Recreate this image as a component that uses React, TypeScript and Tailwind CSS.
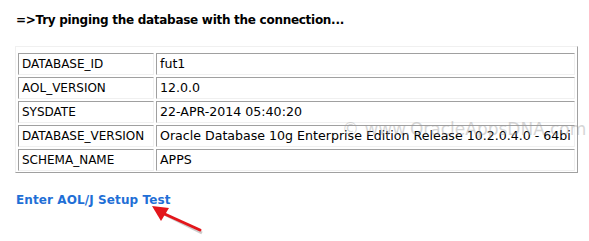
const rows: [string, string][] = [
  ["DATABASE_ID", "fut1"],
  ["AOL_VERSION", "12.0.0"],
  ["SYSDATE", "22-APR-2014 05:40:20"],
  ["DATABASE_VERSION", "Oracle Database 10g Enterprise Edition Release 10.2.0.4.0 - 64bi"],
  ["SCHEMA_NAME", "APPS"],
];

const font = { fontFamily: '"DejaVu Sans", Verdana, sans-serif' };

export default function App() {
  return (
    <div className="relative w-[589px] h-[241px] bg-white overflow-hidden text-black" style={font}>
      <div className="pl-[16px] pt-[13px] h-[46px] text-[12px] font-bold leading-[15px] tracking-[-0.28px]">
        =&gt;Try pinging the database with the connection...
      </div>

      {/* Result table */}
      <div className="ml-[15px] w-[563px] border border-t-[#f0f0f0] border-l-[#f0f0f0] border-r-[#a0a0a0] border-b-[#a0a0a0] pt-[6px] px-[2px] pb-[1px] flex flex-col gap-[2px]">
        {rows.map(([k, v]) => (
          <div key={k} className="flex gap-[2px] h-[22px]">
            <div className="w-[136px] shrink-0 border border-t-[#a0a0a0] border-l-[#a0a0a0] border-r-[#f0f0f0] border-b-[#f0f0f0] pl-[3px] text-[12px] leading-[20px] whitespace-nowrap overflow-hidden">
              {k}
            </div>
            <div className="flex-1 min-w-0 border border-t-[#a0a0a0] border-l-[#a0a0a0] border-r-[#f0f0f0] border-b-[#f0f0f0] pl-[3px] text-[12.6px] leading-[20px] whitespace-nowrap overflow-hidden">
              {v}
            </div>
          </div>
        ))}
      </div>

      <a href="#" className="block ml-[16px] mt-[20px] w-fit text-[12px] font-bold leading-[15px] tracking-[0.1px] text-[#1f6fd6] no-underline">
        Enter AOL/J Setup Test
      </a>

      {/* watermark */}
      <div className="absolute left-[342px] top-[119px] text-[17px] leading-[20px] text-[#9a9a9a] opacity-40 whitespace-nowrap pointer-events-none">
        © www.OracleAppsDNA.com
      </div>

      {/* red arrow */}
      <svg className="absolute left-[146px] top-[200px]" width="60" height="36" viewBox="0 0 60 36">
        <line x1="16" y1="13" x2="56" y2="33" stroke="#9a9a9a" strokeOpacity="0.5" strokeWidth="3" />
        <line x1="12" y1="11" x2="54" y2="30" stroke="#e3161b" strokeWidth="3" strokeLinecap="round" />
        <polygon points="6,6 23,8 15,21" fill="#e3161b" />
      </svg>
    </div>
  );
}
